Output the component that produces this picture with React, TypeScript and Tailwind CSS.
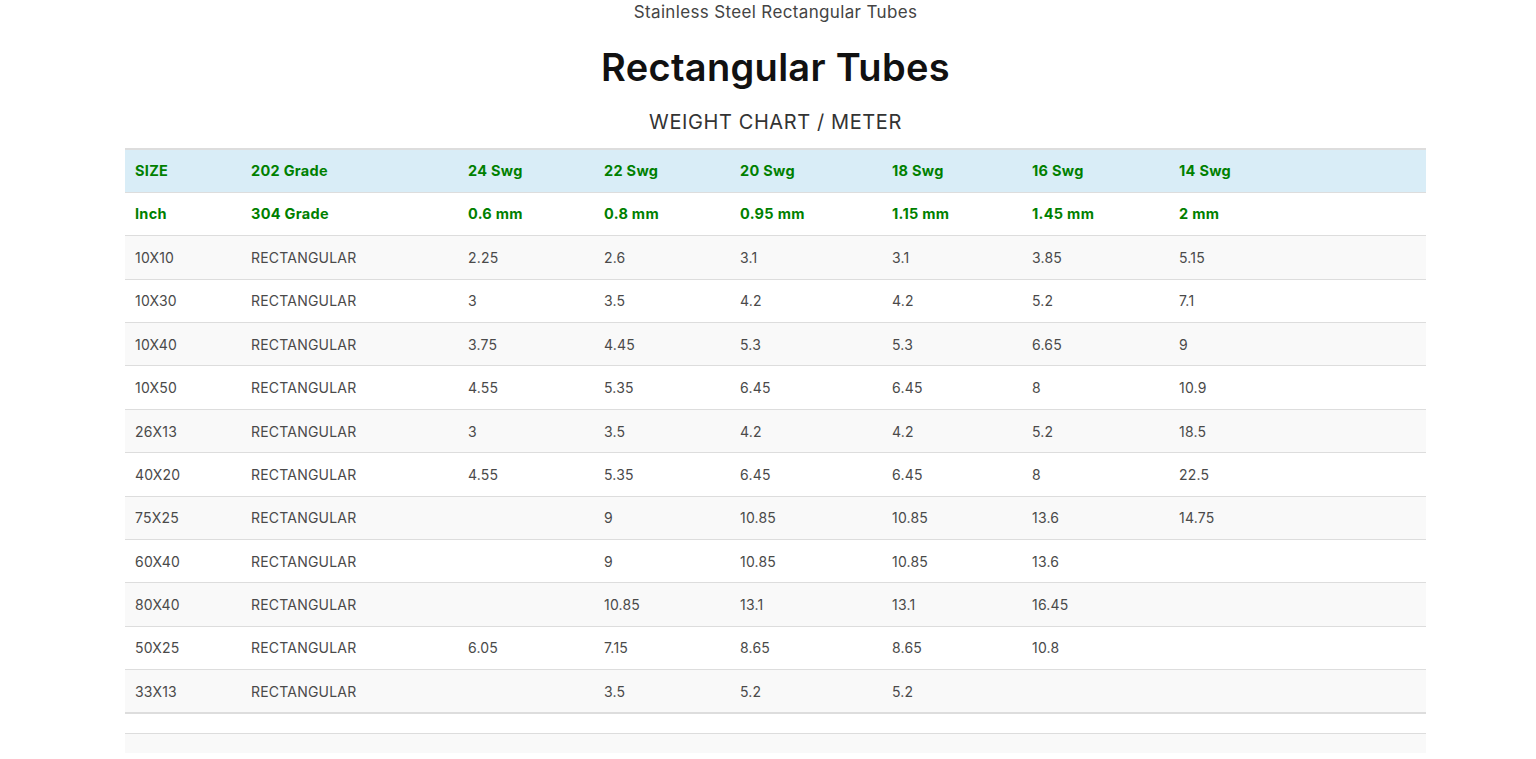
import React from "react";

const cols = ["w-[116px]", "w-[217px]", "w-[136px]", "w-[136px]", "w-[152px]", "w-[140px]", "w-[147px]", ""];

const head1 = ["SIZE", "202 Grade", "24 Swg", "22 Swg", "20 Swg", "18 Swg", "16 Swg", "14 Swg"];
const head2 = ["Inch", "304 Grade", "0.6 mm", "0.8 mm", "0.95 mm", "1.15 mm", "1.45 mm", "2 mm"];

const rows: string[][] = [
  ["10X10", "RECTANGULAR", "2.25", "2.6", "3.1", "3.1", "3.85", "5.15"],
  ["10X30", "RECTANGULAR", "3", "3.5", "4.2", "4.2", "5.2", "7.1"],
  ["10X40", "RECTANGULAR", "3.75", "4.45", "5.3", "5.3", "6.65", "9"],
  ["10X50", "RECTANGULAR", "4.55", "5.35", "6.45", "6.45", "8", "10.9"],
  ["26X13", "RECTANGULAR", "3", "3.5", "4.2", "4.2", "5.2", "18.5"],
  ["40X20", "RECTANGULAR", "4.55", "5.35", "6.45", "6.45", "8", "22.5"],
  ["75X25", "RECTANGULAR", "", "9", "10.85", "10.85", "13.6", "14.75"],
  ["60X40", "RECTANGULAR", "", "9", "10.85", "10.85", "13.6", ""],
  ["80X40", "RECTANGULAR", "", "10.85", "13.1", "13.1", "16.45", ""],
  ["50X25", "RECTANGULAR", "6.05", "7.15", "8.65", "8.65", "10.8", ""],
  ["33X13", "RECTANGULAR", "", "3.5", "5.2", "5.2", "", ""],
];

export default function App() {
  return (
    <div
      className="bg-white min-h-[759px] w-full"
      style={{ fontFamily: "Inter, 'Open Sans', sans-serif" }}
    >
      <div className="ml-[125px] w-[1301px]">
        <div className="text-center">
          <p className="text-[17px] leading-[24px] text-[#444] tracking-[0.35px]">Stainless Steel Rectangular Tubes</p>
          <h1 className="mt-[19px] text-[38px] leading-[48px] font-semibold text-[#111] tracking-[0.3px]">Rectangular Tubes</h1>
          <h2 className="mt-[16px] text-[20px] leading-[30px] text-[#333] tracking-[0.6px]">WEIGHT CHART / METER</h2>
        </div>
        <table className="mt-[11px] w-full border-collapse text-[14px]">
          <tbody>
            <tr className="bg-[#d9edf7] border-t-2 border-[#dddddd]">
              {head1.map((h, i) => (
                <td key={i} className={`${cols[i]} h-[43.4px] pl-[10px] text-[14.5px] tracking-[0.3px] font-bold text-[#008000] align-middle`}>{h}</td>
              ))}
            </tr>
            <tr className="bg-white border-t border-[#dddddd]">
              {head2.map((h, i) => (
                <td key={i} className={`${cols[i]} h-[43.4px] pl-[10px] text-[14.5px] tracking-[0.3px] font-bold text-[#008000] align-middle`}>{h}</td>
              ))}
            </tr>
            {rows.map((r, ri) => (
              <tr key={ri} className={`border-t border-[#dddddd] ${ri % 2 === 0 ? "bg-[#f9f9f9]" : "bg-white"} ${ri === rows.length - 1 ? "border-b-2" : ""}`}>
                {r.map((c, ci) => (
                  <td key={ci} className="h-[43.4px] pl-[10px] text-[#4a4a4a] tracking-[0.2px] align-middle">{c}</td>
                ))}
              </tr>
            ))}
            <tr className="bg-white border-t border-[#dddddd]">
              <td colSpan={8} className="h-[20px]"></td>
            </tr>
            <tr className="bg-[#f9f9f9] border-t border-[#dddddd]">
              <td colSpan={8} className="h-[20px]"></td>
            </tr>
          </tbody>
        </table>
      </div>
    </div>
  );
}
